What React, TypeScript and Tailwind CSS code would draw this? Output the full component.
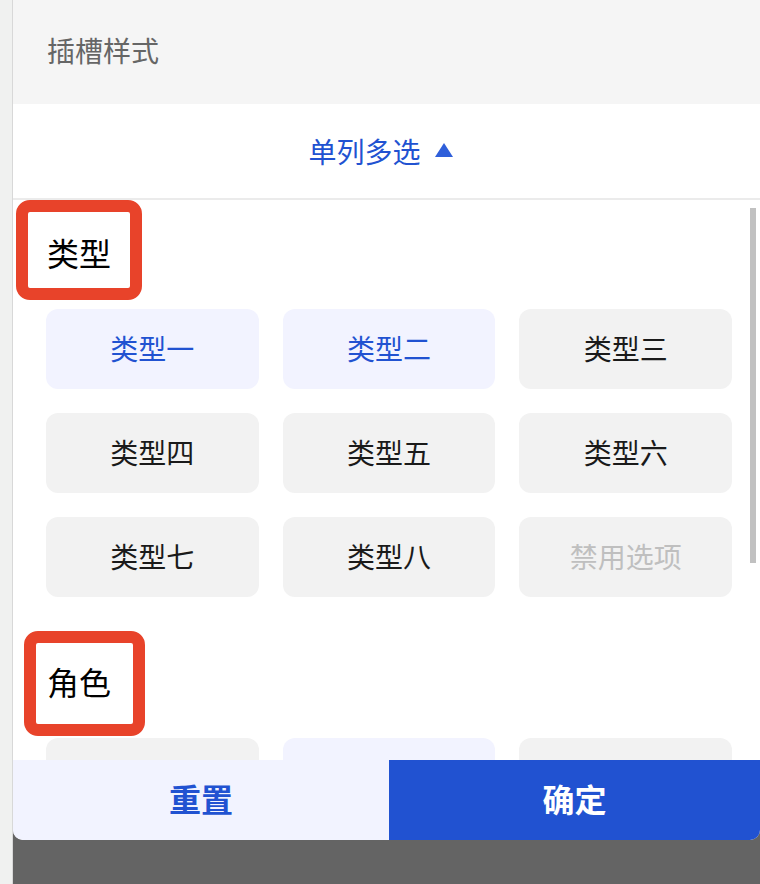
import React from "react";

type Opt = { label: string; state: "selected" | "normal" | "disabled" };

const types: Opt[] = [
  { label: "类型一", state: "selected" },
  { label: "类型二", state: "selected" },
  { label: "类型三", state: "normal" },
  { label: "类型四", state: "normal" },
  { label: "类型五", state: "normal" },
  { label: "类型六", state: "normal" },
  { label: "类型七", state: "normal" },
  { label: "类型八", state: "normal" },
  { label: "禁用选项", state: "disabled" },
];

const roles: Opt[] = [
  { label: "", state: "normal" },
  { label: "", state: "selected" },
  { label: "", state: "normal" },
];

function OptionButton({ opt }: { opt: Opt }) {
  const cls =
    opt.state === "selected"
      ? "bg-[#f2f3ff] text-[#2152d1]"
      : opt.state === "disabled"
      ? "bg-[#f2f2f2] text-[#bfbfbf]"
      : "bg-[#f2f2f2] text-[#1a1a1a]";
  return (
    <div
      className={`h-[80px] rounded-[12px] flex items-center justify-center pb-[2px] text-[28px] leading-none ${cls}`}
    >
      {opt.label}
    </div>
  );
}

export default function App() {
  return (
    <div className="flex w-[760px] h-[884px] font-['Noto_Sans_CJK_SC','Noto_Sans',sans-serif]">
      <div className="w-[13px] shrink-0 bg-[#f0f1f0] border-r border-[#d8d8d8]" />
      <div className="flex-1 flex flex-col bg-[#646464]">
        <div className="h-[840px] flex flex-col bg-white rounded-b-[10px] overflow-hidden">
          <div className="h-[104px] shrink-0 bg-[#f5f5f5] flex items-center pl-[34px] pb-[4px] text-[28px] text-[#666666] leading-none">
            插槽样式
          </div>
          <div className="h-[96px] shrink-0 border-b-2 border-[#ebebeb] flex items-center justify-center gap-[14px] pr-[12px] text-[#2152d1] text-[28px] leading-none">
            <span>单列多选</span>
            <svg width="18" height="14" viewBox="0 0 18 14" className="mt-[-2px]">
              <polygon points="9,0 18,14 0,14" fill="#2f5fda" />
            </svg>
          </div>
          <div className="flex-1 flex overflow-hidden">
            <div className="flex-1 pl-[33px] pr-[18px]">
              <div className="relative h-[109px] flex items-center pl-[1px] pb-[6px] text-[32px] text-black leading-none">
                <div className="absolute left-[-30px] top-0 w-[126px] h-[100px] border-[12px] border-[#e8432a] rounded-[14px]" />
                <span className="relative">类型</span>
              </div>
              <div className="grid grid-cols-3 gap-[24px]">
                {types.map((o) => (
                  <OptionButton key={o.label} opt={o} />
                ))}
              </div>
              <div className="relative mt-[32px] h-[109px] flex items-center pl-[1px] pb-[6px] text-[32px] text-black leading-none">
                <div className="absolute left-[-22px] top-[2px] w-[121px] h-[105px] border-[12px] border-[#e8432a] rounded-[14px]" />
                <span className="relative">角色</span>
              </div>
              <div className="grid grid-cols-3 gap-[24px]">
                {roles.map((o, i) => (
                  <OptionButton key={i} opt={o} />
                ))}
              </div>
            </div>
            <div className="w-[6px] mr-[4px] mt-[8px] h-[355px] bg-[#c1c1c1]" />
          </div>
          <div className="h-[80px] shrink-0 flex">
            <div className="w-[376px] bg-[#f2f3ff] flex items-center justify-center pb-[4px] text-[32px] font-bold text-[#2152d1] leading-none">
              重置
            </div>
            <div className="flex-1 bg-[#2152d1] flex items-center justify-center pb-[4px] text-[32px] font-bold text-white leading-none">
              确定
            </div>
          </div>
        </div>
      </div>
    </div>
  );
}
